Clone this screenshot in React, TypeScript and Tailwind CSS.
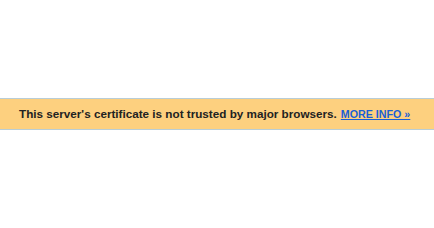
export default function App() {
  return (
    <div className="w-[434px] h-[228px] bg-white pt-[98px]" style={{ fontFamily: '"Liberation Sans", Arial, sans-serif' }}>
      <div className="h-[32px] bg-[#fdd07f] border-y border-[#b9cdd6] flex items-center pl-[19px] whitespace-nowrap">
        <span className="text-[11.7px] font-bold text-[#222]">This server's certificate is not trusted by major browsers.</span>
        <a href="#" className="ml-[4px] text-[10.7px] font-bold text-[#1a5fd6] underline">MORE INFO »</a>
      </div>
    </div>
  );
}
